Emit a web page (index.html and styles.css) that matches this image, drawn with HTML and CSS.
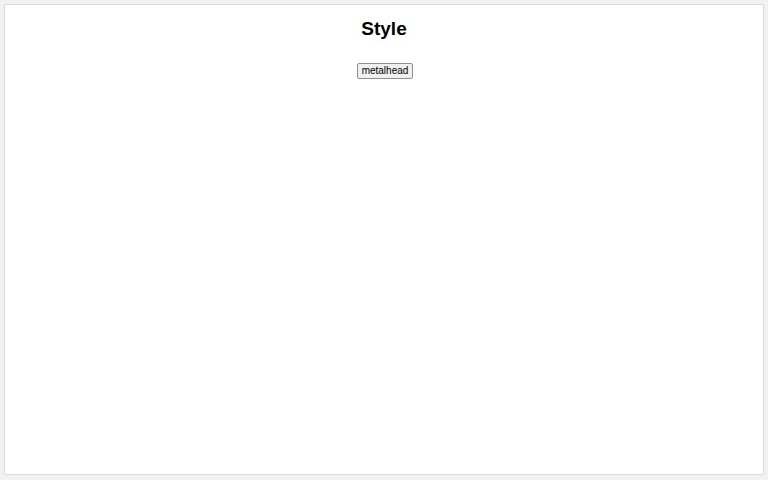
FILE: index.html
```html
<!DOCTYPE html>
<html>
<head>
<meta charset="utf-8">
<link rel="stylesheet" href="styles.css">
</head>
<body>
<div class="panel">
  <h1 class="title">Style</h1>
  <div class="actions"><button class="btn">metalhead</button></div>
</div>
</body>
</html>
```
FILE: styles.css
```css
html, body { margin: 0; padding: 0; }
body {
  background: #f2f2f2;
  font-family: "Liberation Sans", Arial, sans-serif;
  padding: 4px 4px 5px 4px;
  height: 480px;
  box-sizing: border-box;
}
.panel {
  background: #fff;
  border: 1px solid #dcdcdc;
  height: 100%;
  box-sizing: border-box;
  display: flex;
  flex-direction: column;
  align-items: center;
}
.title {
  margin: 13px 0 0 0;
  font-size: 19px;
  line-height: 22px;
  font-weight: bold;
  color: #000;
}
.actions { margin-top: 23px; padding-left: 2px; display: flex; }
.btn {
  font-family: "Liberation Sans", Arial, sans-serif;
  font-size: 10px;
  line-height: 11px;
  padding: 1px 4px 2px 4px;
  margin: 0;
  border: 1px solid #8f8f8f;
  border-radius: 2px;
  background: #f0f0f0;
  color: #000;
}
```
